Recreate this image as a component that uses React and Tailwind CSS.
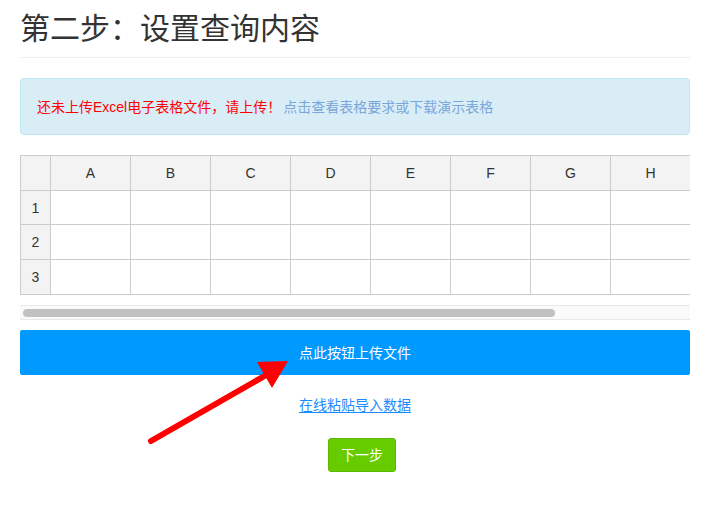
import React from "react";

const cols = ["A", "B", "C", "D", "E", "F", "G", "H", "", ""];
const rows = [
  { n: 1, h: "h-[34px]" },
  { n: 2, h: "h-[35px]" },
  { n: 3, h: "h-[35px]" },
];

const App = () => {
  return (
    <div
      className="relative w-[715px] h-[508px] bg-white pl-5 pr-[25px] text-[#333]"
      style={{ fontFamily: '"Liberation Sans", "Noto Sans CJK SC", sans-serif' }}
    >
      {/* Title */}
      <h1 className="pt-[9px] pb-[8px] text-[30px] leading-[40px] font-normal border-b border-[#eeeeee]">
        第二步：设置查询内容
      </h1>

      {/* Alert */}
      <div className="mt-5 h-[57px] flex items-center px-4 bg-[#d9edf7] border border-[#bce8f1] rounded text-sm">
        <span className="text-[#ff0000]">还未上传Excel电子表格文件，请上传！</span>
        <a className="ml-[2px] text-[#7ba6d9] cursor-pointer">点击查看表格要求或下载演示表格</a>
      </div>

      {/* Spreadsheet */}
      <div className="mt-[20px] overflow-hidden">
        <table className="border-collapse text-sm text-[#333] table-fixed w-[830px]">
          <thead>
            <tr className="h-[35px]">
              <th className="w-[30px] bg-[#f3f3f3] border border-[#cccccc] font-normal"></th>
              {cols.map((c, i) => (
                <th key={i} className="w-[80px] bg-[#f3f3f3] border border-[#cccccc] font-normal">
                  {c}
                </th>
              ))}
            </tr>
          </thead>
          <tbody>
            {rows.map((r) => (
              <tr key={r.n} className={r.h}>
                <td className="bg-[#f3f3f3] border border-[#cccccc] text-center">{r.n}</td>
                {cols.map((c, i) => (
                  <td key={i} className="border border-[#cccccc]"></td>
                ))}
              </tr>
            ))}
          </tbody>
        </table>
      </div>

      {/* Scrollbar */}
      <div className="mt-[10px] h-[15px] bg-[#fafafa] border-y border-[#e8e8e8] flex items-center px-[3px]">
        <div className="w-[532px] h-[8px] rounded-full bg-[#c1c1c1]"></div>
      </div>

      {/* Upload button */}
      <button className="mt-[10px] w-full h-[45px] bg-[#0099ff] text-white text-sm rounded-[2px]">
        点此按钮上传文件
      </button>

      {/* Paste link */}
      <div className="mt-[18px] text-center">
        <a className="text-sm text-[#1a8cff] underline underline-offset-2 cursor-pointer">在线粘贴导入数据</a>
      </div>

      {/* Next */}
      <div className="mt-[21px] flex justify-center">
        <button className="ml-[14px] w-[68px] h-[34px] bg-[#66cc00] border border-[#5cb800] text-white text-sm rounded-[3px]">
          下一步
        </button>
      </div>

      {/* Red arrow overlay */}
      <svg className="absolute left-0 top-0 pointer-events-none" width="715" height="508">
        <line x1="151" y1="441" x2="268" y2="374" stroke="#ff0000" strokeWidth="6" strokeLinecap="round" />
        <polygon points="257,362 288,361 272,388" fill="#ff0000" />
      </svg>
    </div>
  );
};

export default App;
